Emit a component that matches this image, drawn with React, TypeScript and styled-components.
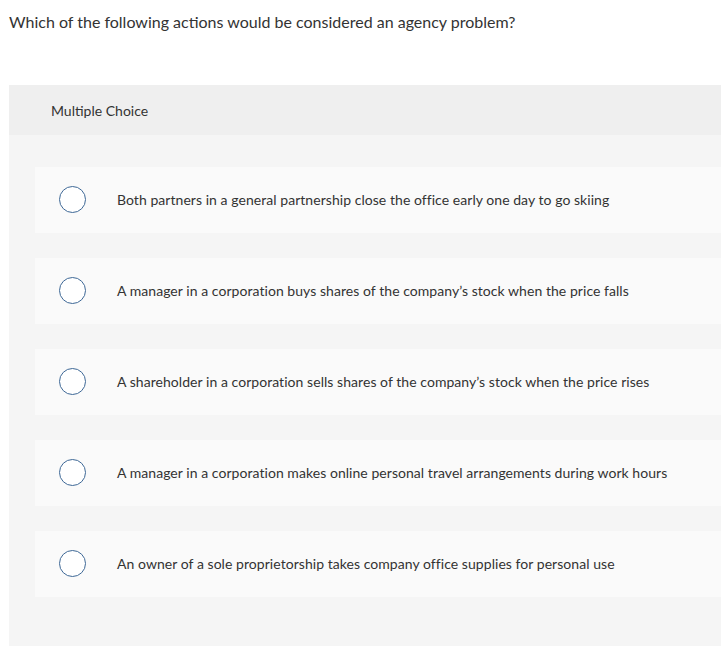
import React from 'react';
import styled, { createGlobalStyle } from 'styled-components';

const GlobalStyle = createGlobalStyle`
  html, body {
    margin: 0;
    padding: 0;
    background: #ffffff;
    font-family: Lato, "Open Sans", Arial, sans-serif;
    color: #2c2c2c;
  }
`;

const Page = styled.div`
  width: 721px;
  height: 646px;
  overflow: hidden;
  padding: 0 0 0 9px;
  box-sizing: border-box;
`;

const Question = styled.p`
  margin: 0;
  padding-top: 12px;
  height: 85px;
  box-sizing: border-box;
  font-size: 16px;
  line-height: 20px;
  color: #333;
`;

const Panel = styled.section`
  background: #f5f5f5;
  height: 561px;
`;

const PanelHeader = styled.div`
  height: 50px;
  background: #efefef;
  display: flex;
  align-items: center;
  padding-left: 42px;
  font-size: 14px;
  color: #333;
`;

const OptionList = styled.div`
  display: flex;
  flex-direction: column;
  gap: 25px;
  padding: 32px 0 0 26px;
`;

const Option = styled.label`
  height: 66px;
  background: #fafafa;
  display: flex;
  align-items: center;
  padding: 0 0 1px 24px;
  box-sizing: border-box;
  font-size: 14px;
  letter-spacing: 0.05px;
  color: #333;
  cursor: pointer;
`;

const Radio = styled.span`
  width: 25px;
  height: 25px;
  border: 1.5px solid #3e6896;
  border-radius: 50%;
  background: #fff;
  flex-shrink: 0;
  margin-right: 31px;
`;

const options = [
  'Both partners in a general partnership close the office early one day to go skiing',
  'A manager in a corporation buys shares of the company\u2019s stock when the price falls',
  'A shareholder in a corporation sells shares of the company\u2019s stock when the price rises',
  'A manager in a corporation makes online personal travel arrangements during work hours',
  'An owner of a sole proprietorship takes company office supplies for personal use',
];

const App: React.FC = () => {
  return (
    <Page>
      <GlobalStyle />
      <Question>Which of the following actions would be considered an agency problem?</Question>
      <Panel>
        <PanelHeader>Multiple Choice</PanelHeader>
        <OptionList>
          {options.map((text) => (
            <Option key={text}>
              <Radio />
              {text}
            </Option>
          ))}
        </OptionList>
      </Panel>
    </Page>
  );
};

export default App;
